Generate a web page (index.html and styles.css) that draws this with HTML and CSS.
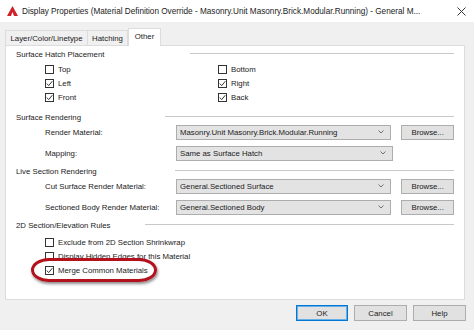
FILE: index.html
```html
<!DOCTYPE html>
<html lang="en">
<head>
    <meta charset="UTF-8">
    <title>Display Properties</title>
    <link rel="stylesheet" href="styles.css">
</head>
<body>
    <div class="dialog">
        <div class="titlebar">
            <svg class="app-icon" width="11" height="10" viewBox="0 0 11 10">
                <polygon points="5.5,0 11,10 0,10" fill="#d0202b"/>
                <polygon points="5.5,6 7,10 4,10" fill="#fff"/>
            </svg>
            <span class="title">Display Properties (Material Definition Override - Masonry.Unit Masonry.Brick.Modular.Running) - General M...</span>
            <svg class="close" width="9" height="9" viewBox="0 0 9 9">
                <path d="M0.5 0.5 L8.5 8.5 M8.5 0.5 L0.5 8.5" stroke="#333" stroke-width="1"/>
            </svg>
        </div>

        <div class="tabs">
            <div class="tab tab-layer">Layer/Color/Linetype</div>
            <div class="tab tab-hatch">Hatching</div>
            <div class="tab tab-other active">Other</div>
        </div>

        <div class="panel">
            <div class="group-head head-hatch"><span>Surface Hatch Placement</span><i class="rule"></i></div>
            <div class="check-grid">
                <div class="check"><span class="box"></span>Top</div>
                <div class="check"><span class="box"></span>Bottom</div>
                <div class="check"><span class="box checked"><svg viewBox="0 0 7 7"><path d="M0.8 3.6 L2.7 5.6 L6.3 1.2"/></svg></span>Left</div>
                <div class="check"><span class="box checked"><svg viewBox="0 0 7 7"><path d="M0.8 3.6 L2.7 5.6 L6.3 1.2"/></svg></span>Right</div>
                <div class="check"><span class="box checked"><svg viewBox="0 0 7 7"><path d="M0.8 3.6 L2.7 5.6 L6.3 1.2"/></svg></span>Front</div>
                <div class="check"><span class="box checked"><svg viewBox="0 0 7 7"><path d="M0.8 3.6 L2.7 5.6 L6.3 1.2"/></svg></span>Back</div>
            </div>

            <div class="group-head head-render gap-6"><span>Surface Rendering</span><i class="rule"></i></div>
            <div class="fields">
                <div class="field">
                    <span class="field-label">Render Material:</span>
                    <div class="select"><span>Masonry.Unit Masonry.Brick.Modular.Running</span><svg width="6" height="4" viewBox="0 0 6 4"><path d="M0.5 0.5 L3 3 L5.5 0.5"/></svg></div>
                    <div class="button browse">Browse...</div>
                </div>
                <div class="field">
                    <span class="field-label">Mapping:</span>
                    <div class="select"><span>Same as Surface Hatch</span><svg width="6" height="4" viewBox="0 0 6 4"><path d="M0.5 0.5 L3 3 L5.5 0.5"/></svg></div>
                </div>
            </div>

            <div class="group-head head-live gap-3"><span>Live Section Rendering</span><i class="rule"></i></div>
            <div class="fields">
                <div class="field">
                    <span class="field-label">Cut Surface Render Material:</span>
                    <div class="select"><span>General.Sectioned Surface</span><svg width="6" height="4" viewBox="0 0 6 4"><path d="M0.5 0.5 L3 3 L5.5 0.5"/></svg></div>
                    <div class="button browse">Browse...</div>
                </div>
                <div class="field">
                    <span class="field-label">Sectioned Body Render Material:</span>
                    <div class="select"><span>General.Sectioned Body</span><svg width="6" height="4" viewBox="0 0 6 4"><path d="M0.5 0.5 L3 3 L5.5 0.5"/></svg></div>
                    <div class="button browse">Browse...</div>
                </div>
            </div>

            <div class="group-head head-rules gap-3"><span>2D Section/Elevation Rules</span><i class="rule"></i></div>
            <div class="check-list">
                <div class="check"><span class="box"></span>Exclude from 2D Section Shrinkwrap</div>
                <div class="check"><span class="box"></span>Display Hidden Edges for this Material</div>
                <div class="check"><span class="box checked"><svg viewBox="0 0 7 7"><path d="M0.8 3.6 L2.7 5.6 L6.3 1.2"/></svg></span>Merge Common Materials</div>
            </div>
        </div>

        <div class="footer">
            <div class="button default">OK</div>
            <div class="button">Cancel</div>
            <div class="button">Help</div>
        </div>

        <!-- red annotation around the option -->
        <div class="callout"></div>
    </div>
</body>
</html>
```

FILE: styles.css
```css
body {
    margin: 0;
    padding: 0;
    background-color: #f0f0f0;
}

.dialog {
    position: relative;
    width: 474px;
    height: 330px;
    background-color: #f0f0f0;
    font-family: "Liberation Sans", Arial, sans-serif;
    font-size: 7.8px;
    color: #1a1a1a;
    overflow: hidden;
}

.titlebar {
    height: 22px;
    background-color: #fff;
    display: flex;
    align-items: center;
    padding: 0 8px 0 7px;
}

.app-icon {
    flex: none;
    margin-right: 4px;
}

.title {
    flex: 1;
    font-size: 8.2px;
    white-space: nowrap;
    overflow: hidden;
}

.close {
    flex: none;
    margin-left: 8px;
}

.tabs {
    display: flex;
    align-items: flex-end;
    height: 17px;
    margin: 6px 0 0 5px;
}

.tab {
    height: 15px;
    box-sizing: border-box;
    display: flex;
    align-items: center;
    justify-content: center;
    border: 1px solid #dcdcdc;
    border-bottom: none;
    background-color: #f0f0f0;
}

.tab-layer {
    width: 83px;
}

.tab-hatch {
    width: 40px;
    border-left: none;
}

.tab-other {
    width: 33px;
}

.tab.active {
    height: 18px;
    margin-bottom: -1px;
    background-color: #fff;
    position: relative;
    z-index: 1;
    padding-bottom: 2px;
}

.panel {
    height: 255px;
    box-sizing: border-box;
    margin: 0 9px 0 5px;
    padding: 1px 10px 0 10px;
    background-color: #fff;
    border: 1px solid #dcdcdc;
}

.group-head {
    display: flex;
    align-items: center;
    height: 14px;
}

.group-head span {
    flex: none;
}

.head-hatch span { width: 174px; }
.head-render span { width: 149px; }
.head-live span { width: 159px; }
.head-rules span { width: 129px; }

.gap-6 { margin-top: 6px; }
.gap-3 { margin-top: 3px; }

.rule {
    flex: 1;
    height: 1px;
    background-color: #c8c8c8;
    margin-top: -1px;
}

.check-grid {
    display: grid;
    grid-template-columns: 173px 1fr;
    grid-auto-rows: 14px;
    padding-left: 29px;
    margin-top: 1px;
}

.check-list {
    display: grid;
    grid-auto-rows: 14px;
    padding-left: 29px;
    margin-top: 3px;
}

.check {
    display: flex;
    align-items: center;
    gap: 4px;
    white-space: nowrap;
}

.box {
    width: 9px;
    height: 9px;
    box-sizing: border-box;
    border: 1px solid #333;
    background-color: #fff;
    display: flex;
}

.box svg {
    width: 7px;
    height: 7px;
    fill: none;
    stroke: #333;
    stroke-width: 1;
}

.fields {
    display: flex;
    flex-direction: column;
    gap: 5px;
    padding-left: 29px;
}

.field {
    display: flex;
    align-items: center;
    height: 16px;
}

.field-label {
    width: 131px;
    flex: none;
}

.select {
    width: 217px;
    height: 15px;
    box-sizing: border-box;
    display: flex;
    align-items: center;
    justify-content: space-between;
    padding: 0 6px 0 3px;
    background-color: #e3e3e3;
    border: 1px solid #adadad;
}

.select svg {
    fill: none;
    stroke: #707070;
    stroke-width: 1;
}

.button {
    width: 53px;
    height: 15px;
    box-sizing: border-box;
    display: flex;
    align-items: center;
    justify-content: center;
    background-color: #e1e1e1;
    border: 1px solid #adadad;
}

.browse {
    margin-left: 10px;
}

.footer {
    display: flex;
    justify-content: flex-end;
    gap: 6px;
    padding: 5px 8px 0 0;
}

.footer .button {
    height: 16px;
}

.button.default {
    width: 52px;
    border: 1px solid #0078d7;
    box-shadow: inset 0 0 0 1px #6aaee6;
}

.callout {
    position: absolute;
    left: 31px;
    top: 258px;
    width: 126px;
    height: 24px;
    box-sizing: border-box;
    border: 3px solid #b3121c;
    border-radius: 18px / 12px;
    box-shadow: 1px 2px 3px rgba(0, 0, 0, 0.45);
}
```
